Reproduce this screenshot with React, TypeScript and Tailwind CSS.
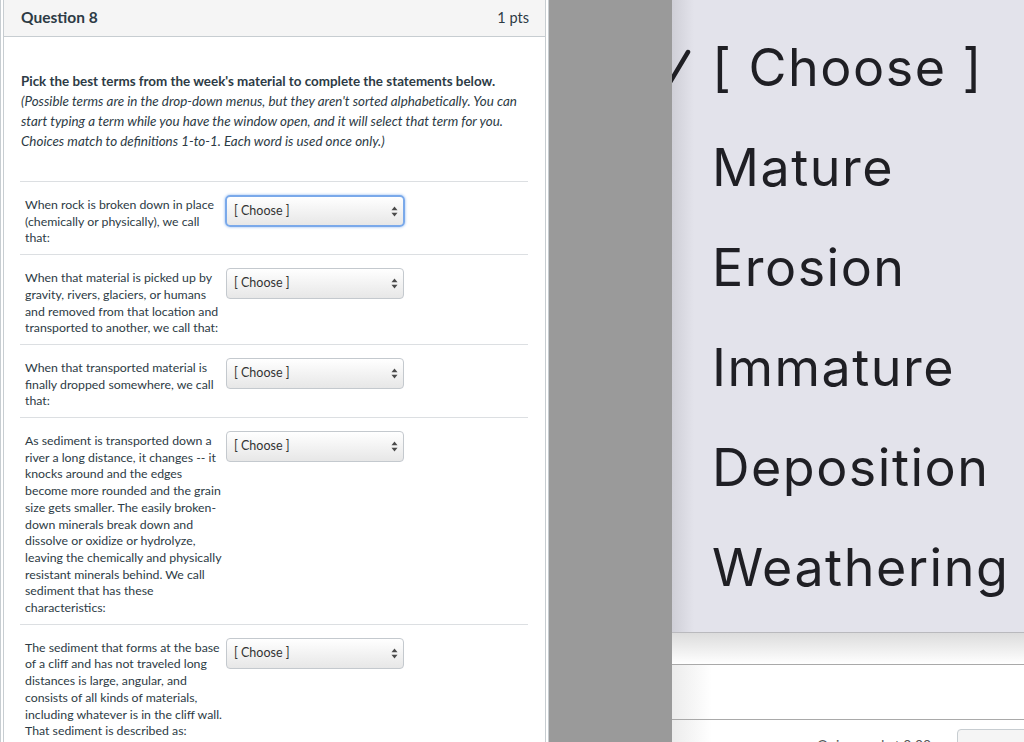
import React from "react";

const rows: string[] = [
  "When rock is broken down in place (chemically or physically), we call that:",
  "When that material is picked up by gravity, rivers, glaciers, or humans and removed from that location and transported to another, we call that:",
  "When that transported material is finally dropped somewhere, we call that:",
  "As sediment is transported down a river a long distance, it changes -- it knocks around and the edges become more rounded and the grain size gets smaller. The easily broken-down minerals break down and dissolve or oxidize or hydrolyze, leaving the chemically and physically resistant minerals behind. We call sediment that has these characteristics:",
  "The sediment that forms at the base of a cliff and has not traveled long distances is large, angular, and consists of all kinds of materials, including whatever is in the cliff wall. That sediment is described as:",
];

const options = ["[ Choose ]", "Mature", "Erosion", "Immature", "Deposition", "Weathering"];

const Arrows = () => (
  <svg width="7" height="11" viewBox="0 0 7 11" className="shrink-0">
    <path d="M3.5 0.5 L6.5 4.3 H0.5 Z" fill="#4a4a4a" />
    <path d="M3.5 10.5 L6.5 6.7 H0.5 Z" fill="#4a4a4a" />
  </svg>
);

const Select = ({ focused }: { focused?: boolean }) => (
  <div
    className={
      focused
        ? "flex h-[32px] w-[180px] shrink-0 items-center justify-between rounded-[5px] border-2 border-[#7aa9ea] bg-linear-to-b from-white to-[#e7e7e7] pl-[7px] pr-[5px] text-[12.5px] text-[#333] shadow-[0_0_3px_#8ab6f0]"
        : "ml-[1px] flex h-[31px] w-[178px] shrink-0 items-center justify-between rounded-[4px] border border-[#c4c9ce] bg-linear-to-b from-white to-[#e7e7e7] pl-[7px] pr-[5px] text-[12.5px] text-[#333]"
    }
  >
    <span>[&nbsp;Choose&nbsp;]</span>
    <Arrows />
  </div>
);

export default function App() {
  return (
    <div className="flex h-[742px] w-[1024px] overflow-hidden bg-white font-['Lato',sans-serif] text-[#2d3b45]">
      {/* quiz question card */}
      <div className="h-full w-[549px] shrink-0 border-x border-[#c7cdd1] px-[2px]">
        <div className="h-full border-x border-[#c7cdd1]">
          <div className="flex h-[37px] items-center justify-between border-b border-[#c7cdd1] bg-[#f5f5f5] pl-[17px] pr-[16px]">
            <span className="text-[15.5px] font-bold">Question 8</span>
            <span className="text-[14.5px]">1 pts</span>
          </div>
          <div className="px-[16px] pt-[34px]">
            <div className="pl-[1px] text-[13.4px] leading-[20px]">
              <p className="font-bold">
                Pick the best terms from the week's material to complete the statements below.
              </p>
              <p className="italic">
                (Possible terms are in the drop-down menus, but they aren't sorted alphabetically. You can
                start typing a term while you have the window open, and it will select that term for you.
                Choices match to definitions 1-to-1. Each word is used once only.)
              </p>
            </div>
            <div className="mt-[30px] mr-[1px]">
              {rows.map((text, i) => (
                <div key={i} className="flex border-t border-[#dcdfe2] pb-[7px] pl-[5px] pt-[13px]">
                  <div className="w-[200px] shrink-0 pr-[1px] pt-[2px] text-[12.3px] leading-[16.7px]">{text}</div>
                  <Select focused={i === 0} />
                </div>
              ))}
            </div>
          </div>
        </div>
      </div>

      {/* dimmed backdrop */}
      <div className="h-full w-[123px] shrink-0 bg-[#9a9a9a]" />

      {/* zoomed option menu */}
      <div className="relative flex h-full flex-1 flex-col overflow-hidden">
        <div className="h-[633px] shrink-0 border-b border-[#b9b9bd] bg-[linear-gradient(to_right,#cfcfd7,#e3e3eb_22px)] pl-[40px] pt-[18px] font-['Inter',sans-serif] text-[52px] leading-[100px] tracking-[1.5px] text-[#1f1f24]">
          {options.map((o) => (
            <div key={o} className="h-[100px] whitespace-nowrap">
              {o}
            </div>
          ))}
        </div>
        <svg className="absolute left-0 top-[44px]" width="24" height="40" viewBox="0 0 24 40">
          <path d="M-3 40 L16 8" stroke="#1f1f24" strokeWidth="4.5" strokeLinecap="round" />
        </svg>
        <div className="h-[32px] shrink-0 border-b border-[#a9a9a9] bg-linear-to-b from-[#dcdcdc] to-white" />
        <div className="h-[55px] shrink-0 border-b border-[#a9a9a9] bg-[linear-gradient(to_right,#ececec,#ffffff_40px)]" />
        <div className="flex flex-1 items-start bg-[linear-gradient(to_right,#ececec,#ffffff_40px)] pl-[145px]">
          <span className="mt-[14px] whitespace-nowrap text-[14px] text-[#555]">Quiz saved at 0:00</span>
          <div className="ml-[26px] mt-[9px] h-[36px] whitespace-nowrap rounded-[4px] border border-[#c7cdd1] bg-[#f5f5f5] px-[14px] pt-[8px] text-[14px] text-[#2d3b45]">
            Submit Quiz
          </div>
        </div>
      </div>
    </div>
  );
}
